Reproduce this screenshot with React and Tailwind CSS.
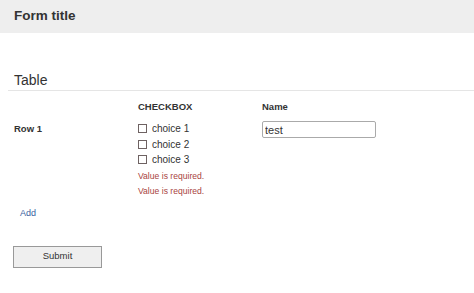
export default function App() {
  const font = { fontFamily: '"Liberation Sans", Arial, sans-serif' };
  return (
    <div className="w-[474px] h-[293px] bg-white text-[#333333] overflow-hidden" style={font}>
      <div className="h-[33px] bg-[#eeeeee] px-[14px] flex items-center">
        <h1 className="text-[13.5px] font-bold leading-none text-[#333333] -mt-[2px]">Form title</h1>
      </div>
      <div className="pl-[8px]">
        <div className="mt-[38px] h-[19px] pl-[6px] text-[14px] leading-[19px] text-[#333333]">Table</div>
        <div className="border-b border-[#e5e5e5]"></div>
        <div className="pl-[6px] pt-[9px] grid grid-cols-[124px_124px_1fr] text-[9.5px]">
          <div></div>
          <div className="font-bold leading-[14px]">CHECKBOX</div>
          <div className="font-bold leading-[14px]">Name</div>
          <div className="pt-[7px] font-bold leading-[15.5px]">Row 1</div>
          <div className="pt-[7px] flex flex-col">
            {["choice 1", "choice 2", "choice 3"].map((c) => (
              <label key={c} className="flex items-center h-[15.5px] gap-[5px]">
                <span className="w-[9px] h-[9px] border border-[#6e6262] bg-white"></span>
                <span className="leading-[15.5px] text-[10px]">{c}</span>
              </label>
            ))}
            <div className="mt-[1px] text-[8.6px] leading-[15.5px] text-[#a94442]">Value is required.</div>
            <div className="text-[8.6px] leading-[15.5px] text-[#a94442]">Value is required.</div>
          </div>
          <div className="pt-[7px]">
            <input
              readOnly
              value="test"
              className="w-[114px] h-[17px] border border-[#aaaaaa] rounded-[2px] px-[2px] text-[11px] text-[#333333] outline-none"
              style={font}
            />
          </div>
        </div>
        <div className="pl-[12px] mt-[7px] text-[9px] leading-[12px] text-[#3a5fa0]">Add</div>
        <div className="pl-[5px] mt-[27px]">
          <button
            className="w-[89px] h-[22px] border border-[#999999] bg-[#efefef] text-[9.5px] text-[#333333] flex items-center justify-center"
            style={font}
          >
            Submit
          </button>
        </div>
      </div>
    </div>
  );
}
